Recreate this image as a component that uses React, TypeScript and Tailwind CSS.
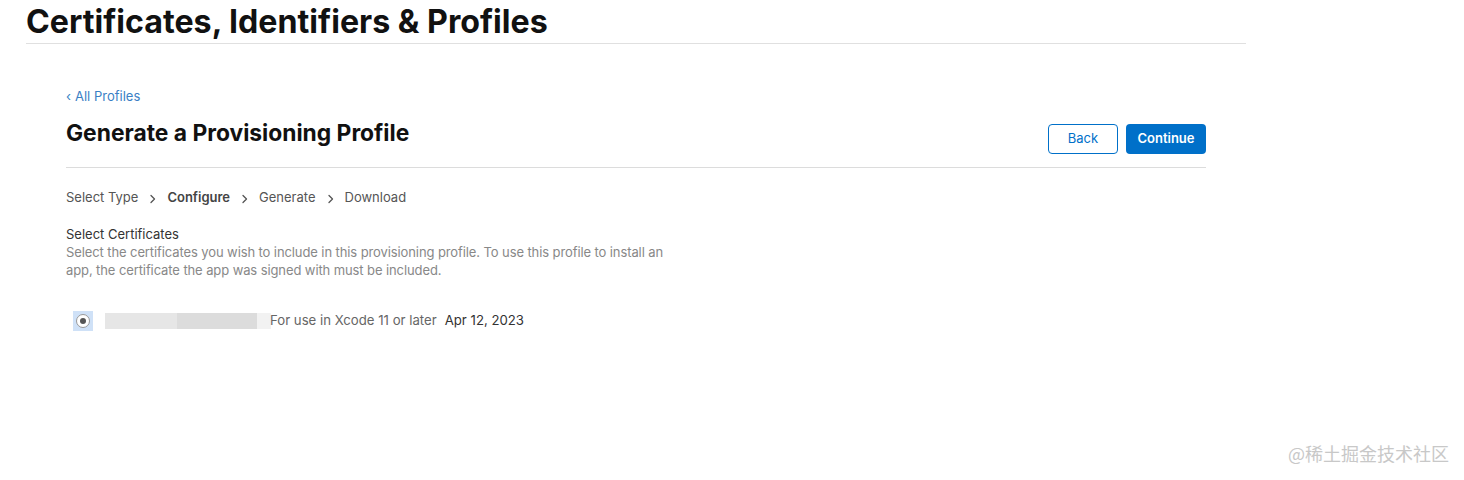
import React from "react";

function Chevron() {
  return (
    <svg width="8" height="10" viewBox="0 0 8 10" className="ml-[11px] mr-[10px] mt-[3px]">
      <path d="M2 1.5 L5.5 5 L2 8.5" fill="none" stroke="#555" strokeWidth="1.3" strokeLinecap="round" strokeLinejoin="round" />
    </svg>
  );
}

export default function App() {
  return (
    <div className="relative w-[1464px] h-[480px] bg-white overflow-hidden" style={{ fontFamily: "Inter, 'Noto Sans', sans-serif" }}>
      <div className="pl-[26px] w-[1246px]">
        <h1 className="text-[32.2px] leading-[40px] font-bold text-[#111] pt-[2px]">Certificates, Identifiers &amp; Profiles</h1>
        <div className="h-px bg-[#e0e0e0] mt-[1px]" />
      </div>

      <div className="pl-[66px] w-[1206px] pt-[43px]">
        <a className="text-[13px] leading-[18px] text-[#3a7fc5] flex items-center">
          <span className="mr-[4px] text-[13px]">‹</span>All Profiles
        </a>
        <div className="flex items-start justify-between mt-[13px]">
          <h2 className="text-[22.8px] leading-[30px] font-bold text-[#111]">Generate a Provisioning Profile</h2>
          <div className="flex gap-[8px] mt-[6px]">
            <button className="w-[70px] h-[30px] rounded-[4px] border border-[#0070c9] text-[#0070c9] text-[13px] bg-white">Back</button>
            <button className="w-[80px] h-[30px] rounded-[4px] bg-[#0070c9] text-white text-[13px] font-semibold">Continue</button>
          </div>
        </div>
        <div className="h-px bg-[#dcdcdc] mt-[13px]" />

        <div className="flex items-center mt-[20px] text-[13px] leading-[18px] text-[#555]">
          <span>Select Type</span>
          <Chevron />
          <span className="font-semibold text-[#444]">Configure</span>
          <Chevron />
          <span>Generate</span>
          <Chevron />
          <span>Download</span>
        </div>

        <div className="mt-[19px] text-[13px] leading-[18px] text-[#333]">Select Certificates</div>
        <p className="text-[13px] leading-[18px] text-[#888] w-[610px] tracking-[-0.1px]">
          Select the certificates you wish to include in this provisioning profile. To use this profile to install an app, the certificate the app was signed with must be included.
        </p>

        <div className="flex items-center mt-[32px] ml-[7px]">
          <div className="w-[20px] h-[20px] bg-[#cfe1f7] flex items-center justify-center">
            <div className="w-[14px] h-[14px] rounded-full bg-white border border-[#999] flex items-center justify-center">
              <div className="w-[6px] h-[6px] rounded-full bg-[#555]" />
            </div>
          </div>
          <div className="ml-[12px] h-[16px] w-[166px] flex">
            <div className="w-[72px] h-full bg-[#e6e6e6]" />
            <div className="w-[80px] h-full bg-[#dcdcdc]" />
            <div className="w-[14px] h-full bg-[#f2f2f2]" />
          </div>
          <span className="text-[13.2px] text-[#666] ml-[-1px]">For use in Xcode 11 or later</span>
          <span className="text-[13.2px] text-[#333] ml-[8px]">Apr 12, 2023</span>
        </div>
      </div>

      <div className="absolute left-[1288px] top-[441px] text-[18px] leading-[24px] text-[#c8c8c8]" style={{ fontFamily: "'Noto Sans CJK SC', sans-serif" }}>
        @稀土掘金技术社区
      </div>
    </div>
  );
}
